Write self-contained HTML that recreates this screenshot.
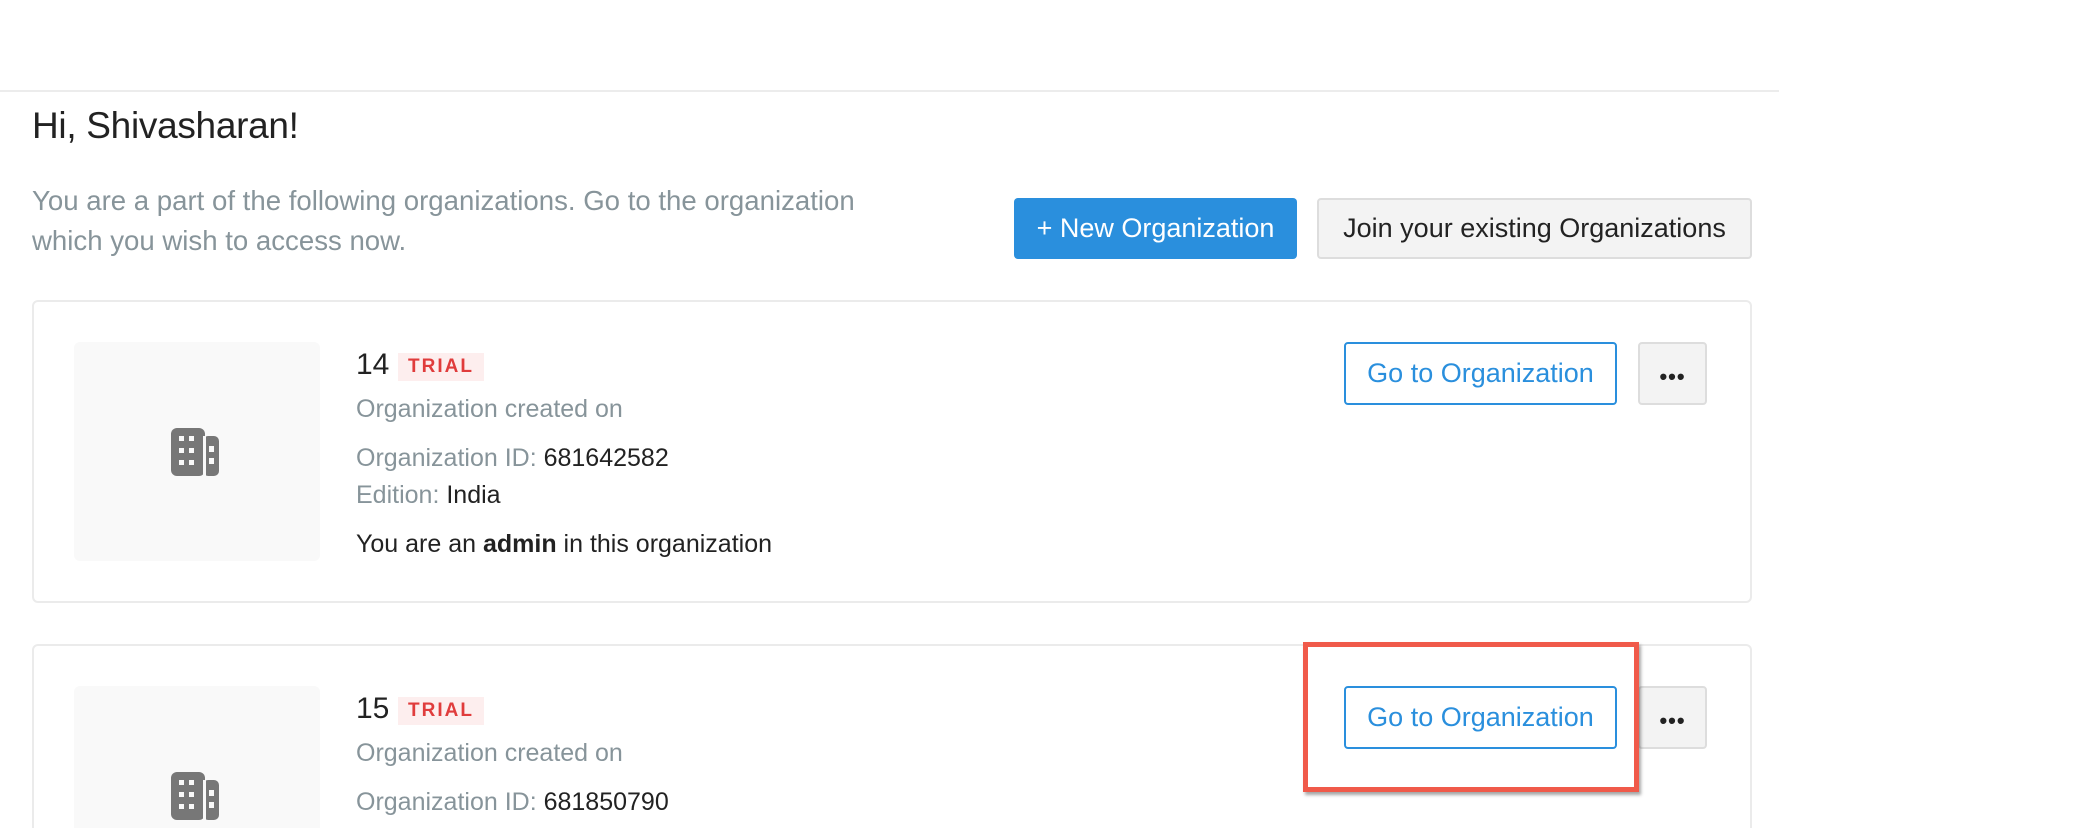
<!DOCTYPE html>
<html><head><meta charset="utf-8"><style>
*{margin:0;padding:0;box-sizing:border-box}
html,body{width:2073px;height:828px;overflow:hidden}
body{background:#fff;font-family:"Liberation Sans",sans-serif;position:relative;color:#222}
.a{position:absolute}
.hl{left:0;top:90px;width:1779px;height:2px;background:#ececec}
.g{left:32px;top:106px;font-size:37px;color:#222;line-height:40px;letter-spacing:-0.3px}
.sub{left:32px;top:181px;font-size:27.6px;line-height:40px;color:#87949a;width:900px;white-space:nowrap}
.btn{display:flex;align-items:center;justify-content:center;font-size:27px;border-radius:4px}
.new{left:1014px;top:198px;width:283px;height:61px;background:#2a8fdd;color:#fff}
.join{left:1317px;top:198px;width:435px;height:61px;background:#f3f3f3;border:2px solid #ddd;color:#222}
.card{left:32px;width:1720px;border:2px solid #ebebeb;border-radius:6px}
.logo{left:74px;width:246px;height:219px;background:#f9f9f9;border-radius:6px}
.num{font-size:30px;color:#222;line-height:34px}
.trial{width:86px;height:28px;background:#fdeeee;color:#e03c3c;font-size:19px;letter-spacing:2px;display:flex;align-items:center;justify-content:center;font-weight:bold}
.l{left:356px;font-size:25px;color:#87949a;line-height:28px;white-space:nowrap}
.l b{font-weight:normal;color:#222}
.go{left:1344px;width:273px;height:63px;border:2px solid #2a8fdd;color:#2a8fdd;background:#fff}
.dots{left:1638px;width:69px;height:63px;background:#f3f3f3;border:2px solid #ddd;font-size:22px;font-weight:bold;color:#222;letter-spacing:1px;padding-top:6px}
.red{left:1303px;top:642px;width:336px;height:150px;border:5px solid #f05a4a;box-shadow:2px 3px 3px rgba(0,0,0,.35)}
</style></head><body>
<div class="a hl"></div>
<div class="a g">Hi, Shivasharan!</div>
<div class="a sub">You are a part of the following organizations. Go to the organization<br>which you wish to access now.</div>
<div class="a btn new">+ New Organization</div>
<div class="a btn join">Join your existing Organizations</div>

<div class="a card" style="top:300px;height:303px"></div>
<div class="a logo" style="top:342px"></div>
<svg class="a" style="left:171px;top:428px" width="52" height="48" viewBox="0 0 52 48"><rect x="0" y="0" width="34" height="48" rx="6" fill="#777"/><rect x="32" y="8" width="16" height="40" rx="5" fill="#777"/><g fill="#f9f9f9"><rect x="8" y="8" width="5" height="5"/><rect x="18" y="8" width="5" height="5"/><rect x="8" y="20" width="5" height="5"/><rect x="18" y="20" width="5" height="5"/><rect x="8" y="32" width="5" height="5"/><rect x="18" y="32" width="5" height="5"/><rect x="38" y="18" width="5" height="6"/><rect x="38" y="30" width="5" height="6"/></g><rect x="32" y="8" width="3" height="40" fill="#f9f9f9"/></svg>
<div class="a num" style="left:356px;top:348px">14</div>
<div class="a trial" style="left:398px;top:353px">TRIAL</div>
<div class="a l" style="top:395px">Organization created on</div>
<div class="a l" style="top:444px">Organization ID: <b>681642582</b></div>
<div class="a l" style="top:481px">Edition: <b>India</b></div>
<div class="a l" style="top:530px;color:#222">You are an <strong>admin</strong> in this organization</div>
<div class="a btn go" style="top:342px">Go to Organization</div>
<div class="a btn dots" style="top:342px">•••</div>

<div class="a card" style="top:644px;height:220px"></div>
<div class="a logo" style="top:686px;height:180px"></div>
<svg class="a" style="left:171px;top:772px" width="52" height="48" viewBox="0 0 52 48"><rect x="0" y="0" width="34" height="48" rx="6" fill="#777"/><rect x="32" y="8" width="16" height="40" rx="5" fill="#777"/><g fill="#f9f9f9"><rect x="8" y="8" width="5" height="5"/><rect x="18" y="8" width="5" height="5"/><rect x="8" y="20" width="5" height="5"/><rect x="18" y="20" width="5" height="5"/><rect x="8" y="32" width="5" height="5"/><rect x="18" y="32" width="5" height="5"/><rect x="38" y="18" width="5" height="6"/><rect x="38" y="30" width="5" height="6"/></g><rect x="32" y="8" width="3" height="40" fill="#f9f9f9"/></svg>
<div class="a num" style="left:356px;top:692px">15</div>
<div class="a trial" style="left:398px;top:697px">TRIAL</div>
<div class="a l" style="top:739px">Organization created on</div>
<div class="a l" style="top:788px">Organization ID: <b>681850790</b></div>
<div class="a btn go" style="top:686px">Go to Organization</div>
<div class="a btn dots" style="top:686px">•••</div>
<div class="a red"></div>
</body></html>
